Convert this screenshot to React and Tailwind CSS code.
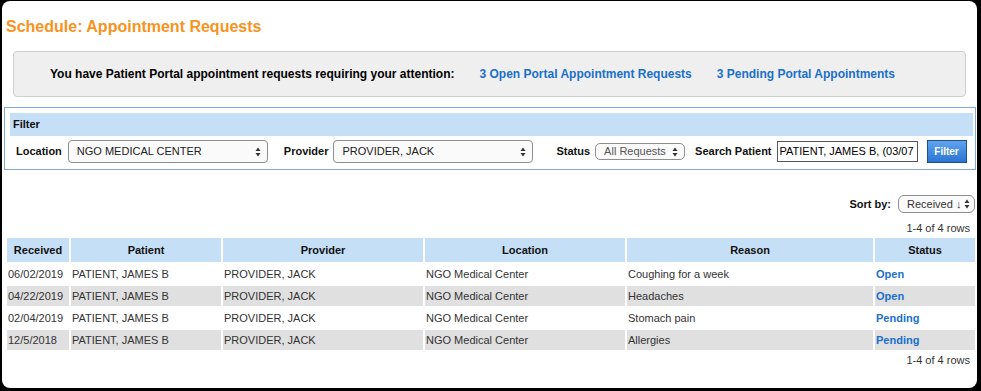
const ROWS = [
  { received: '06/02/2019', patient: 'PATIENT, JAMES B', provider: 'PROVIDER, JACK', location: 'NGO Medical Center', reason: 'Coughing for a week', status: 'Open' },
  { received: '04/22/2019', patient: 'PATIENT, JAMES B', provider: 'PROVIDER, JACK', location: 'NGO Medical Center', reason: 'Headaches', status: 'Open' },
  { received: '02/04/2019', patient: 'PATIENT, JAMES B', provider: 'PROVIDER, JACK', location: 'NGO Medical Center', reason: 'Stomach pain', status: 'Pending' },
  { received: '12/5/2018', patient: 'PATIENT, JAMES B', provider: 'PROVIDER, JACK', location: 'NGO Medical Center', reason: 'Allergies', status: 'Pending' },
]

const FONT = { fontFamily: "'Liberation Sans', Arial, sans-serif" }

function Arrows() {
  return (
    <svg width="6" height="10" viewBox="0 0 6 10" className="shrink-0">
      <path d="M3 0.5 L5.5 4 L0.5 4 Z" fill="#333" />
      <path d="M3 9.5 L5.5 6 L0.5 6 Z" fill="#333" />
    </svg>
  )
}

function Select({ value, className }) {
  return (
    <div className={`flex items-center justify-between border border-[#8e8e8e] rounded-[4px] bg-[#fafafa] text-[#222] whitespace-nowrap ${className}`}>
      <span className="truncate">{value}</span>
      <Arrows />
    </div>
  )
}

export default function App() {
  return (
    <div className="w-[981px] h-[391px] bg-black pl-[2px] pr-[4px] pt-[1px] pb-[3px]" style={FONT}>
      <div className="bg-white h-full rounded-[8px] flex flex-col">
        {/* Title */}
        <h1 className="text-[#f7931e] font-bold text-[16px] pl-[4px] pt-[17px] leading-[18px]">
          Schedule: Appointment Requests
        </h1>

        {/* Notice */}
        <div className="mx-[11px] mt-[15px] h-[46px] bg-[#efefef] border border-[#cfcfcf] rounded-[4px] flex items-center pl-[36px] gap-[25px] text-[12px] font-bold">
          <span className="text-black">You have Patient Portal appointment requests requiring your attention:</span>
          <span className="text-[#1a6fcc]">3 Open Portal Appointment Requests</span>
          <span className="text-[#1a6fcc]">3 Pending Portal Appointments</span>
        </div>

        {/* Filter */}
        <div className="ml-[2px] mr-[1px] mt-[10px] border border-[#7fa9d8] pl-[5px] pr-[2px] pt-[5px] h-[63px]">
          <div className="bg-[#c5dff6] h-[23px] flex items-center pl-[3px] text-[11px] font-bold text-[#111]">Filter</div>
          <div className="flex items-center mt-[4px] h-[23px] text-[11px] whitespace-nowrap">
            <span className="font-bold text-[#111] ml-[6px]">Location</span>
            <Select value="NGO MEDICAL CENTER" className="ml-[6px] w-[200px] h-[23px] pl-[8px] pr-[6px] text-[11px]" />
            <span className="font-bold text-[#111] ml-[16px]">Provider</span>
            <Select value="PROVIDER, JACK" className="ml-[5px] w-[200px] h-[23px] pl-[8px] pr-[6px] text-[11px]" />
            <span className="font-bold text-[#111] ml-[23px]">Status</span>
            <Select value="All Requests" className="ml-[5px] w-[90px] h-[17px] pl-[8px] pr-[6px] text-[11px] text-[#555] rounded-[5px]" />
            <span className="font-bold text-[#111] ml-[10px]">Search Patient</span>
            <div className="ml-[5px] w-[141px] h-[21px] border border-[#555] flex items-center pl-[2px] text-[11px] text-black overflow-hidden">
              PATIENT, JAMES B, (03/07
            </div>
            <button className="ml-[9px] w-[40px] h-[23px] border border-[#1d4f8f] bg-gradient-to-b from-[#5ea4ee] to-[#2a74d3] text-white font-bold text-[10px]">
              Filter
            </button>
          </div>
        </div>

        {/* Sort */}
        <div className="flex justify-end items-center mt-[25px] pr-[2px] text-[11px]">
          <span className="font-bold text-[#111]">Sort by:</span>
          <Select value="Received ↓" className="ml-[7px] w-[77px] h-[18px] pl-[8px] pr-[4px] text-[11px] text-[#333] rounded-[6px]" />
        </div>
        <div className="text-right pr-[7px] mt-[8px] text-[11px] text-[#333] leading-[14px]">1-4 of 4 rows</div>

        {/* Table */}
        <table className="mx-[3px] mt-[1px] border-separate border-spacing-[2px] text-[11px] text-[#333] w-[972px]">
          <thead>
            <tr className="h-[24px]">
              <th className="bg-[#c5dff6] text-[#111] font-bold w-[62px]">Received</th>
              <th className="bg-[#c5dff6] text-[#111] font-bold w-[150px]">Patient</th>
              <th className="bg-[#c5dff6] text-[#111] font-bold w-[200px]">Provider</th>
              <th className="bg-[#c5dff6] text-[#111] font-bold w-[200px]">Location</th>
              <th className="bg-[#c5dff6] text-[#111] font-bold w-[246px]">Reason</th>
              <th className="bg-[#c5dff6] text-[#111] font-bold">Status</th>
            </tr>
          </thead>
          <tbody>
            {ROWS.map((r, i) => (
              <tr key={i} className={`h-[20px] ${i % 2 ? 'bg-[#e0e0e0]' : 'bg-white'}`}>
                <td className="pl-[1px]">{r.received}</td>
                <td className="pl-[1px]">{r.patient}</td>
                <td className="pl-[1px]">{r.provider}</td>
                <td className="pl-[1px]">{r.location}</td>
                <td className="pl-[1px]">{r.reason}</td>
                <td className="pl-[1px] font-bold text-[#1a6fcc]">{r.status}</td>
              </tr>
            ))}
          </tbody>
        </table>
        <div className="text-right pr-[7px] mt-[1px] text-[11px] text-[#333] leading-[14px]">1-4 of 4 rows</div>
      </div>
    </div>
  )
}
